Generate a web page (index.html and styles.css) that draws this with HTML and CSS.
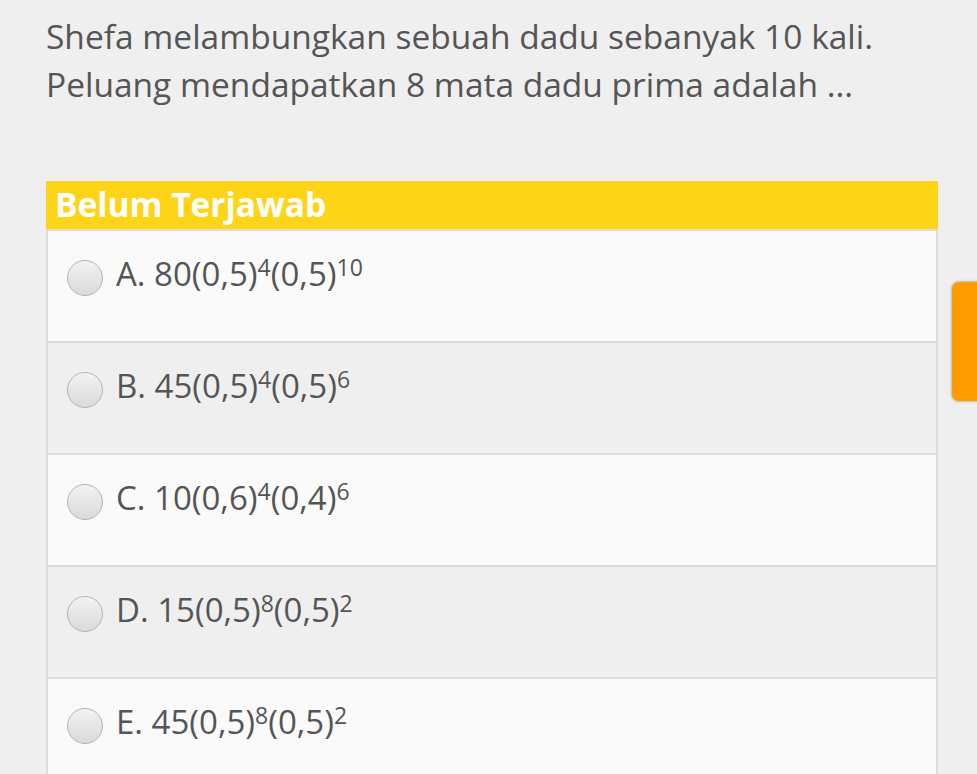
FILE: index.html
```html
<!DOCTYPE html>
<html>
<head>
<meta charset="utf-8">
<link rel="stylesheet" href="styles.css">
</head>
<body>
<div class="page">
  <div class="question">Shefa melambungkan sebuah dadu sebanyak 10 kali.<br>Peluang mendapatkan 8 mata dadu prima adalah ...</div>
  <div class="status">Belum Terjawab</div>
  <div class="options">
    <div class="opt light"><span class="radio"></span><span class="label">A. 80(0,5)<sup>4</sup>(0,5)<sup>10</sup></span></div>
    <div class="opt dark"><span class="radio"></span><span class="label">B. 45(0,5)<sup>4</sup>(0,5)<sup>6</sup></span></div>
    <div class="opt light"><span class="radio"></span><span class="label">C. 10(0,6)<sup>4</sup>(0,4)<sup>6</sup></span></div>
    <div class="opt dark"><span class="radio"></span><span class="label">D. 15(0,5)<sup>8</sup>(0,5)<sup>2</sup></span></div>
    <div class="opt light"><span class="radio"></span><span class="label">E. 45(0,5)<sup>8</sup>(0,5)<sup>2</sup></span></div>
  </div>
</div>
<div class="tab"></div>
</body>
</html>
```
FILE: styles.css
```css
html, body {
  margin: 0;
  padding: 0;
  background: #efefef;
  overflow: hidden;
}
body {
  font-family: "Open Sans", "DejaVu Sans", sans-serif;
  color: #555;
  width: 977px;
  height: 774px;
}
.page {
  padding: 12px 39px 0 46px;
}
.question {
  font-size: 33.5px;
  line-height: 48px;
  color: #555;
  white-space: nowrap;
}
.status {
  margin-top: 73px;
  background: #fdd417;
  color: #fff;
  font-weight: bold;
  font-size: 33.5px;
  line-height: 46px;
  height: 48px;
  padding-left: 9px;
  box-sizing: border-box;
  white-space: nowrap;
}
.options {
  border-left: 2px solid #ddd;
  border-right: 2px solid #ddd;
}
.opt {
  height: 112px;
  box-sizing: border-box;
  border-top: 2px solid #ddd;
  display: flex;
  align-items: flex-start;
  padding: 29px 0 0 19px;
}
.opt.light { background: #fafafa; }
.opt.dark { background: #efefef; }
.radio {
  width: 34px;
  height: 34px;
  border-radius: 50%;
  border: 1px solid #b4b4b4;
  background: linear-gradient(#f2f2f2, #dadada);
  flex: none;
}
.label {
  margin-left: 13px;
  margin-top: -4px;
  font-size: 33px;
  line-height: 36px;
  color: #555;
  white-space: nowrap;
}
.label sup {
  font-size: 23px;
  vertical-align: 10px;
  line-height: 0;
}
.tab {
  position: absolute;
  left: 951px;
  top: 281px;
  width: 40px;
  height: 119px;
  background: #ff9d00;
  border: 1px solid #c9c9c9;
  border-radius: 8px;
  box-shadow: 0 0 3px rgba(0,0,0,0.15);
}
```
